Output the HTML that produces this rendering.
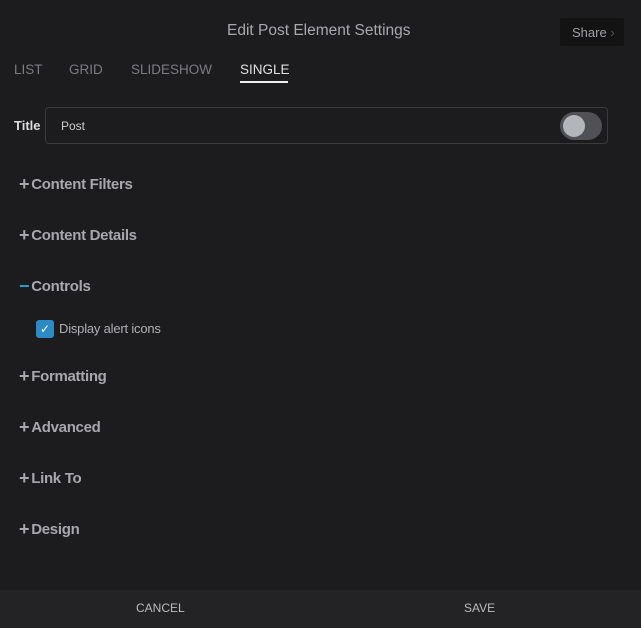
<!DOCTYPE html>
<html><head><style>
*{margin:0;padding:0;box-sizing:border-box}
body{width:641px;height:628px;background:#1c1c1e;font-family:"Liberation Sans",sans-serif;position:relative;overflow:hidden;color:#bbb}
.a{position:absolute;white-space:nowrap}
.h{font-size:15px;color:#a8a8ac;font-weight:bold;letter-spacing:-0.3px}
.h b{color:#a8a8ac;font-size:18px;font-weight:bold;margin-right:2px;position:relative;top:1px}
.t{font-size:13.5px;color:#7c7c80;top:62px}
</style></head><body>
<div class="a" style="left:227px;top:22px;font-size:15.5px;color:#a9a9ad">Edit Post Element Settings</div>
<div class="a" style="left:560px;top:18px;width:64px;height:28px;background:#131314;border-radius:2px;font-size:13px;color:#a0a0a4;padding:7px 0 0 12px">Share <span style="color:#555">›</span></div>
<div class="a t" style="left:14px">LIST</div>
<div class="a t" style="left:69px">GRID</div>
<div class="a t" style="left:131px">SLIDESHOW</div>
<div class="a t" style="left:240px;color:#e0e0e0">SINGLE</div>
<div class="a" style="left:240px;top:81px;width:48px;height:2px;background:#eee"></div>
<div class="a" style="left:14px;top:118px;font-size:13px;color:#ddd;font-weight:bold">Title</div>
<div class="a" style="left:45px;top:107px;width:563px;height:37px;border:1px solid #3a3a3d;border-radius:4px"></div>
<div class="a" style="left:61px;top:119px;font-size:12px;color:#ccc">Post</div>
<div class="a" style="left:560px;top:112px;width:42px;height:28px;background:#505055;border-radius:14px"></div>
<div class="a" style="left:563px;top:115px;width:22px;height:22px;background:#b4b4bb;border-radius:50%"></div>
<div class="a h" style="left:19px;top:173px"><b>+</b>Content Filters</div>
<div class="a h" style="left:19px;top:224px"><b>+</b>Content Details</div>
<div class="a h" style="left:19px;top:275px"><b style="color:#2e9ad8">−</b>Controls</div>
<div class="a" style="left:36px;top:320px;width:18px;height:18px;background:#2c8ac5;border-radius:3px;color:#fff;font-size:12px;text-align:center;line-height:18px">✓</div>
<div class="a" style="left:59px;top:321px;font-size:13px;color:#b0b0b4;letter-spacing:-0.2px">Display alert icons</div>
<div class="a h" style="left:19px;top:365px"><b>+</b>Formatting</div>
<div class="a h" style="left:19px;top:416px"><b>+</b>Advanced</div>
<div class="a h" style="left:19px;top:467px"><b>+</b>Link To</div>
<div class="a h" style="left:19px;top:518px"><b>+</b>Design</div>
<div class="a" style="left:0;top:590px;width:641px;height:38px;background:#232325"></div>
<div class="a" style="left:136px;top:601px;font-size:12px;color:#bbb">CANCEL</div>
<div class="a" style="left:464px;top:601px;font-size:12px;color:#bbb">SAVE</div>
</body></html>
